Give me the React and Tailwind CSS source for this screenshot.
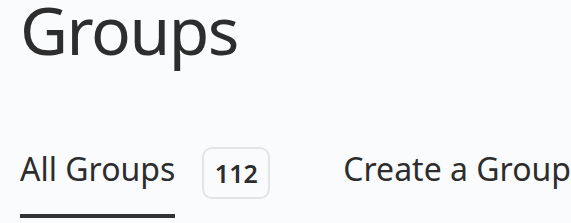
const App = () => {
	return (
		<div
			className="min-h-screen bg-[#fafbfd] px-5 text-[#2d2d2d]"
			style={{ fontFamily: '"Noto Sans", "Open Sans", sans-serif' }}>
			{/* Page title */}
			<h1 className="text-[66px] leading-[56px] tracking-[-1.5px] font-normal pt-[1px] whitespace-nowrap">
				Groups
			</h1>

			{/* Tabs */}
			<nav className="flex items-start mt-[90px] whitespace-nowrap overflow-hidden -mr-5">
				<span className="shrink-0 mt-[2px] text-[32px] leading-[40px] border-b-4 border-[#333333] pb-[25px]">
					All Groups
				</span>
				<span className="shrink-0 ml-[27px] h-[52px] w-[68px] rounded-[10px] border-2 border-[#e4e4e6] flex items-center justify-center pt-[2px] text-[25px] font-semibold">
					112
				</span>
				<span className="shrink-0 mt-[2px] ml-[73px] text-[32px] leading-[40px]">
					Create a Group
				</span>
			</nav>
		</div>
	);
};

export default App;
